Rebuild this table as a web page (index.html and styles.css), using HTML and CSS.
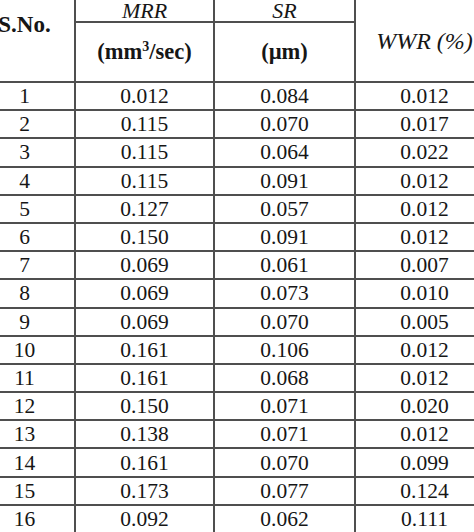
FILE: index.html
```html
<!DOCTYPE html>
<html>
<head>
<meta charset="utf-8">
<link rel="stylesheet" href="styles.css">
</head>
<body>
<table class="data">
  <colgroup>
    <col class="c-no">
    <col class="c-mrr">
    <col class="c-sr">
    <col class="c-wwr">
  </colgroup>
  <thead>
    <tr class="h1">
      <th rowspan="2" class="sno">S.No.</th>
      <th class="it">MRR</th>
      <th class="it">SR</th>
      <th rowspan="2" class="wwr">WWR (%)</th>
    </tr>
    <tr class="h2">
      <th class="unit">(mm<sup>3</sup>/sec)</th>
      <th class="unit">(µm)</th>
    </tr>
  </thead>
  <tbody>
    <tr><td>1</td><td>0.012</td><td>0.084</td><td>0.012</td></tr>
    <tr><td>2</td><td>0.115</td><td>0.070</td><td>0.017</td></tr>
    <tr><td>3</td><td>0.115</td><td>0.064</td><td>0.022</td></tr>
    <tr><td>4</td><td>0.115</td><td>0.091</td><td>0.012</td></tr>
    <tr><td>5</td><td>0.127</td><td>0.057</td><td>0.012</td></tr>
    <tr><td>6</td><td>0.150</td><td>0.091</td><td>0.012</td></tr>
    <tr><td>7</td><td>0.069</td><td>0.061</td><td>0.007</td></tr>
    <tr><td>8</td><td>0.069</td><td>0.073</td><td>0.010</td></tr>
    <tr><td>9</td><td>0.069</td><td>0.070</td><td>0.005</td></tr>
    <tr><td>10</td><td>0.161</td><td>0.106</td><td>0.012</td></tr>
    <tr><td>11</td><td>0.161</td><td>0.068</td><td>0.012</td></tr>
    <tr><td>12</td><td>0.150</td><td>0.071</td><td>0.020</td></tr>
    <tr><td>13</td><td>0.138</td><td>0.071</td><td>0.012</td></tr>
    <tr><td>14</td><td>0.161</td><td>0.070</td><td>0.099</td></tr>
    <tr><td>15</td><td>0.173</td><td>0.077</td><td>0.124</td></tr>
    <tr><td>16</td><td>0.092</td><td>0.062</td><td>0.111</td></tr>
  </tbody>
</table>
</body>
</html>
```
FILE: styles.css
```css
html, body {
  margin: 0;
  padding: 0;
  background: #ffffff;
  overflow: hidden;
}
body {
  width: 474px;
  height: 532px;
}
.data {
  margin-left: -25px;
  border-collapse: collapse;
  table-layout: fixed;
  width: 518px;
  font-family: "Liberation Serif", "Times New Roman", serif;
  color: #161616;
}
.c-no { width: 100px; }
.c-mrr { width: 139px; }
.c-sr { width: 141px; }
.c-wwr { width: 138px; }

.data th, .data td {
  border: 2px solid #4f4f4f;
  padding: 0;
  text-align: center;
}
.data tr:first-child th {
  border-top: none;
}
.data tr > :first-child {
  border-left: none;
}
.data tr > :last-child {
  border-right: none;
}
.data .h1 th {
  height: 21px;
  line-height: 20px;
  font-size: 22px;
}
.data .h2 th {
  height: 58px;
  line-height: 22px;
}
.data .it {
  font-style: italic;
  font-weight: normal;
}
.data .h1 .sno {
  font-size: 23px;
  font-weight: bold;
  vertical-align: top;
  line-height: 50px;
}
.data .h1 .wwr {
  font-style: italic;
  font-weight: normal;
  font-size: 24px;
}
.data .unit {
  font-size: 22.5px;
  font-weight: bold;
}
.unit sup {
  font-size: 14px;
  line-height: 0;
  vertical-align: 8px;
}
.data td {
  height: 26.2px;
  font-size: 21.5px;
  line-height: 24px;
}
.data .h1 th:last-child { border-right: none; }
```
